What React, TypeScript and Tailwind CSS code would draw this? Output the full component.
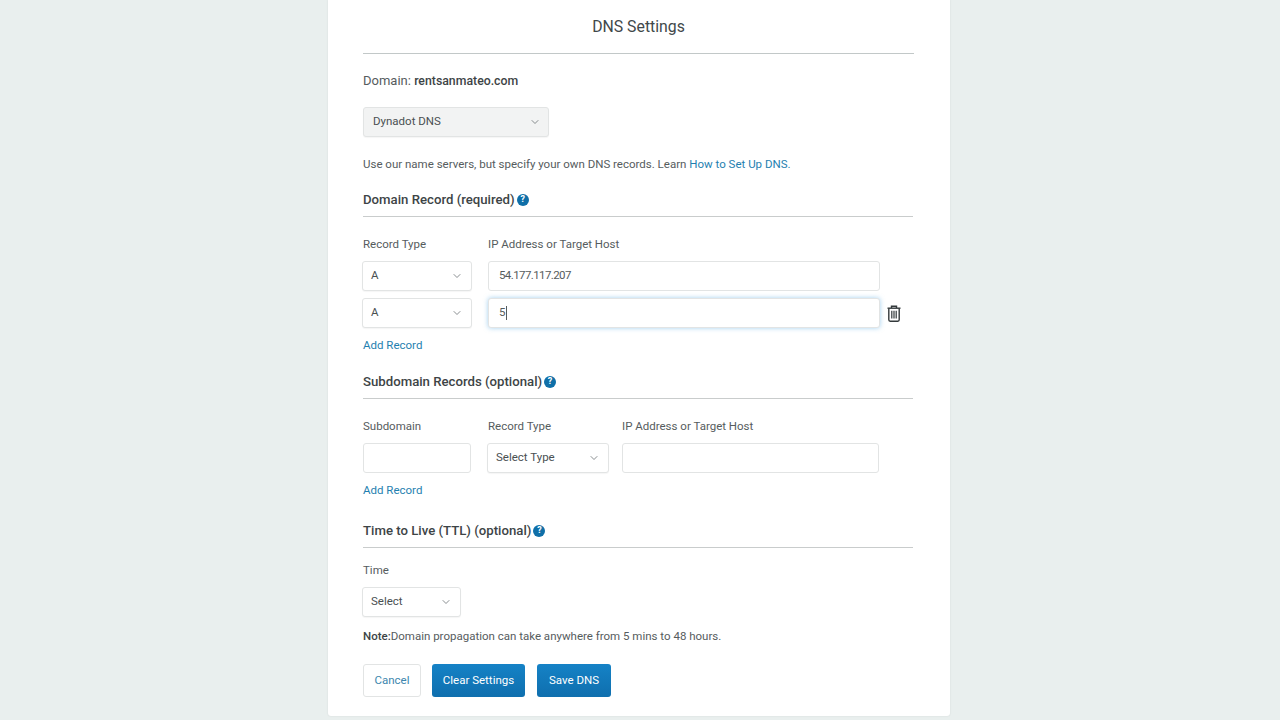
import React from 'react';
import { ChevronDown } from 'lucide-react';

const Help = () => (
  <span className="ml-[2px] flex h-3 w-3 items-center justify-center rounded-full bg-[#0f6fa8] text-[9px] leading-none font-bold text-white">?</span>
);

const SectionHeading = ({ title, className }: { title: string; className: string }) => (
  <div className={`w-[550px] border-b border-[#c9cccc] ${className}`}>
    <div className="flex h-[17px] items-center text-[13.2px] font-medium text-[#3d4446]">
      {title}
      <Help />
    </div>
  </div>
);

const Select = ({ label, className, muted }: { label: string; className: string; muted?: boolean }) => (
  <div className={`flex h-[30px] items-center justify-between rounded-[3px] border border-[#e2e4e4] shadow-[0_1px_1px_rgba(0,0,0,0.04)] ${muted ? 'bg-[#f2f3f3]' : 'bg-white'} ${className}`}>
    <span className="text-[11.5px] text-[#4a5052]">{label}</span>
    <ChevronDown className="h-3 w-3 text-[#62686b]" strokeWidth={1.5} />
  </div>
);

const Label = ({ children, className = '' }: { children: React.ReactNode; className?: string }) => (
  <div className={`text-[11.5px] leading-4 text-[#565c5e] ${className}`}>{children}</div>
);

const TextBox = ({ className, children }: { className: string; children?: React.ReactNode }) => (
  <div className={`flex h-[30px] items-center rounded-[3px] border border-[#e2e4e4] bg-white text-[11.5px] text-[#565c5e] ${className}`}>{children}</div>
);

const TrashIcon = () => (
  <svg width="14" height="17" viewBox="0 0 14 17" fill="none" stroke="#33393b" strokeWidth="1.4">
    <path d="M0.5 3.2h13" />
    <path d="M4.5 3V1.2h5V3" />
    <path d="M1.8 3.4v11.4c0 .8.5 1.4 1.3 1.4h7.8c.8 0 1.3-.6 1.3-1.4V3.4" />
    <path d="M4.8 5.8v7.8M7 5.8v7.8M9.2 5.8v7.8" strokeWidth="1.2" />
  </svg>
);

export default function App() {
  return (
    <div className="h-[720px] w-[1280px] overflow-hidden bg-[#e9efee] font-['Roboto','Noto_Sans',sans-serif]">
      <div className="ml-[328px] flex h-[716px] w-[622px] flex-col rounded-b-[3px] bg-white pl-[35px] shadow-[0_0_2px_rgba(0,0,0,0.1)]">
        <div className="w-[551px] border-b border-[#c2c8c8] pt-[17px] pb-[17px] text-center text-[15.8px] leading-[19px] text-[#41484a]">
          DNS Settings
        </div>

        <div className="mt-[19px] text-[13px] leading-[16px] text-[#565c5e]">
          Domain: <span className="text-[12.3px] font-medium text-[#3d4446]">rentsanmateo.com</span>
        </div>

        <Select label="Dynadot DNS" muted className="mt-[18px] w-[186px] pr-[7px] pl-[9px]" />

        <div className="mt-[19px] text-[11.5px] leading-4 text-[#565c5e]">
          Use our name servers, but specify your own DNS records. Learn <span className="text-[#1f7fb0]">How to Set Up DNS.</span>
        </div>

        <SectionHeading title="Domain Record (required)" className="mt-[19px] pb-[8px]" />

        <div className="mt-[19px] flex">
          <Label className="w-[125px]">Record Type</Label>
          <Label>IP Address or Target Host</Label>
        </div>
        <div className="mt-[9px] -ml-px flex flex-col gap-[7px]">
          <div className="flex gap-4">
            <Select label="A" className="w-[110px] pr-2 pl-2" />
            <TextBox className="w-[392px] pl-[10px] tracking-[-0.6px]">54.177.117.207</TextBox>
          </div>
          <div className="flex items-center gap-4">
            <Select label="A" className="w-[110px] pr-2 pl-2" />
            <TextBox className="w-[392px] border-[#7fb0cf] pl-[10px] shadow-[0_0_5px_rgba(90,170,225,0.55)]">
              5<span className="ml-px h-3.5 w-px bg-[#565c5e]" />
            </TextBox>
            <div className="-ml-[9px]">
              <TrashIcon />
            </div>
          </div>
        </div>
        <div className="mt-[9px] text-[11.5px] leading-4 text-[#1f7fb0]">Add Record</div>

        <SectionHeading title="Subdomain Records (optional)" className="mt-[20px] pb-[8px]" />

        <div className="mt-[19px] flex">
          <Label className="w-[125px]">Subdomain</Label>
          <Label className="w-[134px]">Record Type</Label>
          <Label>IP Address or Target Host</Label>
        </div>
        <div className="mt-[9px] flex">
          <TextBox className="w-[108px]" />
          <Select label="Select Type" className="ml-[16px] w-[122px] pr-2 pl-2" />
          <TextBox className="ml-[13px] w-[257px]" />
        </div>
        <div className="mt-[9px] text-[11.5px] leading-4 text-[#1f7fb0]">Add Record</div>

        <SectionHeading title="Time to Live (TTL) (optional)" className="mt-[24px] pb-[8px]" />

        <Label className="mt-[14px]">Time</Label>
        <Select label="Select" className="mt-[9px] -ml-px w-[99px] pr-2 pl-2" />

        <div className="mt-[11px] text-[11.5px] leading-4 text-[#565c5e]">
          <span className="font-medium text-[#3d4446]">Note:</span>Domain propagation can take anywhere from 5 mins to 48 hours.
        </div>

        <div className="mt-[20px] flex text-[11.5px]">
          <button className="h-[33px] w-[58px] rounded-[3px] border border-[#e2e4e4] bg-white text-[#3c86ae]">Cancel</button>
          <button className="ml-[11px] h-[33px] w-[93px] rounded-[3px] bg-gradient-to-b from-[#1582c6] to-[#0f6fae] text-white">Clear Settings</button>
          <button className="ml-[12px] h-[33px] w-[74px] rounded-[3px] bg-gradient-to-b from-[#1582c6] to-[#0f6fae] text-white">Save DNS</button>
        </div>
      </div>
    </div>
  );
}
